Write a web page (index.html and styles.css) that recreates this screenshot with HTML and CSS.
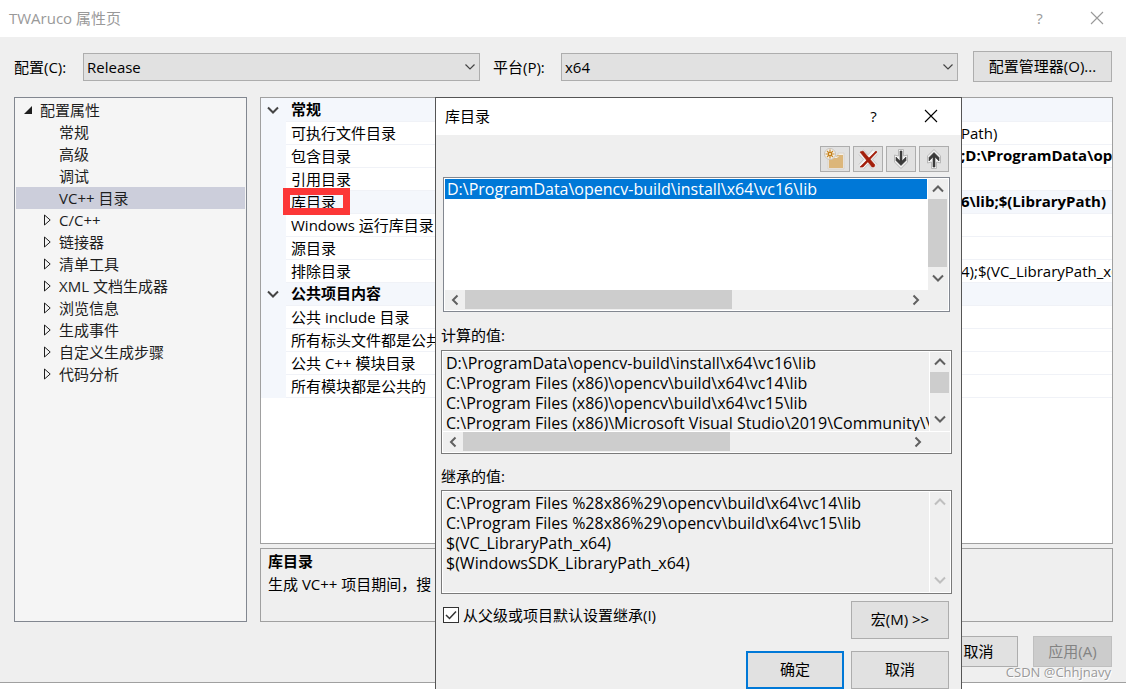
FILE: index.html
```html
<!DOCTYPE html>
<html lang="zh-CN">
<head>
    <meta charset="UTF-8">
    <meta name="viewport" content="width=device-width, initial-scale=1.0">
    <title>TWAruco 属性页</title>
    <link rel="stylesheet" href="styles.css">
</head>
<body>
    <svg class="sprite" width="0" height="0">
        <symbol id="close" viewBox="0 0 14 14"><path d="M1 1L13 13M13 1L1 13" fill="none" stroke="currentColor" stroke-width="1.1"/></symbol>
        <symbol id="down" viewBox="0 0 12 12"><path d="M1 3.5L6 8.5L11 3.5" fill="none" stroke="currentColor" stroke-width="2"/></symbol>
        <symbol id="up" viewBox="0 0 12 12"><path d="M1 8.5L6 3.5L11 8.5" fill="none" stroke="currentColor" stroke-width="2"/></symbol>
        <symbol id="left" viewBox="0 0 12 12"><path d="M8.5 1.5L4 6L8.5 10.5" fill="none" stroke="currentColor" stroke-width="2"/></symbol>
        <symbol id="right" viewBox="0 0 12 12"><path d="M3.5 1.5L8 6L3.5 10.5" fill="none" stroke="currentColor" stroke-width="2"/></symbol>
        <symbol id="thin-down" viewBox="0 0 12 12"><path d="M1.5 3.5L6 8L10.5 3.5" fill="none" stroke="currentColor" stroke-width="1.2"/></symbol>
        <symbol id="closed" viewBox="0 0 8 12"><path d="M1.5 1V11L7.2 6Z" fill="none" stroke="currentColor"/></symbol>
        <symbol id="opened" viewBox="0 0 8 8"><path d="M8 0V8H0Z" fill="currentColor"/></symbol>
    </svg>

    <div class="window">
        <header class="titlebar titlebar-inactive">
            <h1 class="title">TWAruco 属性页</h1>
            <button class="caption" type="button">?</button>
            <button class="caption" type="button" aria-label="关闭"><svg class="close-icon"><use href="#close"/></svg></button>
        </header>

        <main class="content">
            <div class="config-bar">
                <label class="config-label" for="config">配置(C):</label>
                <div class="combo">
                    <select id="config"><option>Release</option></select>
                    <svg class="combo-arrow"><use href="#thin-down"/></svg>
                </div>
                <label class="config-label platform-label" for="platform">平台(P):</label>
                <div class="combo">
                    <select id="platform"><option>x64</option></select>
                    <svg class="combo-arrow"><use href="#thin-down"/></svg>
                </div>
                <button class="btn manager" type="button">配置管理器(O)...</button>
            </div>

            <div class="panes">
                <ul class="tree">
                    <li class="root"><svg class="root-arrow"><use href="#opened"/></svg>配置属性</li>
                    <li>常规</li>
                    <li>高级</li>
                    <li>调试</li>
                    <li class="selected">VC++ 目录</li>
                    <li class="branch"><svg class="branch-arrow"><use href="#closed"/></svg>C/C++</li>
                    <li class="branch"><svg class="branch-arrow"><use href="#closed"/></svg>链接器</li>
                    <li class="branch"><svg class="branch-arrow"><use href="#closed"/></svg>清单工具</li>
                    <li class="branch"><svg class="branch-arrow"><use href="#closed"/></svg>XML 文档生成器</li>
                    <li class="branch"><svg class="branch-arrow"><use href="#closed"/></svg>浏览信息</li>
                    <li class="branch"><svg class="branch-arrow"><use href="#closed"/></svg>生成事件</li>
                    <li class="branch"><svg class="branch-arrow"><use href="#closed"/></svg>自定义生成步骤</li>
                    <li class="branch"><svg class="branch-arrow"><use href="#closed"/></svg>代码分析</li>
                </ul>

                <div class="properties">
                    <div class="grid-box">
                        <table class="grid">
                            <colgroup><col class="col-gutter"><col class="col-name"><col></colgroup>
                            <tbody>
                                <tr class="group first"><td><svg class="group-arrow"><use href="#down"/></svg></td><th colspan="2">常规</th></tr>
                                <tr><td></td><td>可执行文件目录</td><td>Path)</td></tr>
                                <tr><td></td><td>包含目录</td><td class="changed">;D:\ProgramData\opencv-build</td></tr>
                                <tr><td></td><td>引用目录</td><td></td></tr>
                                <tr class="current"><td></td><td class="marked">库目录<span class="mark"></span></td><td class="changed">6\lib;$(LibraryPath)</td></tr>
                                <tr><td></td><td>Windows 运行库目录</td><td></td></tr>
                                <tr><td></td><td>源目录</td><td></td></tr>
                                <tr><td></td><td>排除目录</td><td>4);$(VC_LibraryPath_x64)</td></tr>
                                <tr class="group"><td><svg class="group-arrow"><use href="#down"/></svg></td><th colspan="2">公共项目内容</th></tr>
                                <tr><td></td><td>公共 include 目录</td><td></td></tr>
                                <tr><td></td><td>所有标头文件都是公共</td><td></td></tr>
                                <tr><td></td><td>公共 C++ 模块目录</td><td></td></tr>
                                <tr><td></td><td>所有模块都是公共的</td><td></td></tr>
                            </tbody>
                        </table>
                    </div>
                    <div class="description">
                        <h2>库目录</h2>
                        <p>生成 VC++ 项目期间，搜</p>
                    </div>
                </div>
            </div>

            <footer class="actions">
                <button class="btn action" type="button">取消</button>
                <button class="btn action" type="button" disabled>应用(A)</button>
            </footer>
        </main>
        <span class="watermark">CSDN @Chhjnavy</span>

        <section class="dialog" role="dialog" aria-labelledby="dialog-title">
            <header class="titlebar">
                <h2 class="title" id="dialog-title">库目录</h2>
                <button class="caption" type="button">?</button>
                <button class="caption" type="button" aria-label="关闭"><svg class="close-icon"><use href="#close"/></svg></button>
            </header>

            <div class="dialog-body">
                <div class="tools">
                    <button class="tool" type="button" aria-label="新行">
                        <svg width="22" height="22" viewBox="0 0 22 22">
                            <path d="M4 8H14V5H20V21H4Z" fill="#f3eee6" stroke="#d8d3cc"/>
                            <path d="M5 10H13L15 8H19V20H5Z" fill="#dcb67a"/>
                            <path d="M13 7H19V8H14L12 9Z" fill="#dcb67a"/>
                            <circle cx="6" cy="6" r="5.5" fill="#f5f2ed" stroke="#c8c2ba"/>
                            <path d="M6 1.5V10.5M1.5 6H10.5M3 3L9 9M9 3L3 9" stroke="#c98a2b" stroke-width="1.2"/>
                            <circle cx="6" cy="6" r="2.2" fill="#c27d1a"/>
                            <circle cx="6" cy="6" r="1" fill="#fff3d8"/>
                        </svg>
                    </button>
                    <button class="tool" type="button" aria-label="删除">
                        <svg width="22" height="22" viewBox="0 0 22 22">
                            <path d="M4 4L18 19M18 4L4 19" stroke="#c4c4c4" stroke-width="7"/>
                            <path d="M4 4L18 19M18 4L4 19" stroke="#f4f4f4" stroke-width="5.5"/>
                            <path d="M3 4L6 3L18 17L17 19L15 19ZM19 3L20 4L6 19L3 19Z" fill="#a31f0b" stroke="#a31f0b" stroke-width="0.6"/>
                        </svg>
                    </button>
                    <button class="tool" type="button" aria-label="下移">
                        <svg width="22" height="22" viewBox="0 0 22 22">
                            <path d="M8.5 1.5H13.5V8L17.5 7V14L11 20.5L4.500 14V7L8.500 8Z" fill="#f3f3f3" stroke="#b8b8b8"/>
                            <path d="M10 3H12V13L16 9V12.500L11 17.500L6 12.500V9L10 13Z" fill="#3b3b3b" stroke="#3b3b3b" stroke-width="0.6"/>
                        </svg>
                    </button>
                    <button class="tool" type="button" aria-label="上移">
                        <svg width="22" height="22" viewBox="0 0 22 22">
                            <path d="M8.500 20.500H13.500V14L17.500 15V8L11 1.500L4.500 8V15L8.500 14Z" fill="#f3f3f3" stroke="#b8b8b8"/>
                            <path d="M10 19H12V9L16 13V9.500L11 4.500L6 9.500V13L10 9Z" fill="#3b3b3b" stroke="#3b3b3b" stroke-width="0.6"/>
                        </svg>
                    </button>
                </div>

                <div class="list list-edit">
                    <ul class="lines">
                        <li class="selected-line">D:\ProgramData\opencv-build\install\x64\vc16\lib</li>
                    </ul>
                    <div class="vscroll">
                        <svg><use href="#up"/></svg>
                        <span class="thumb"></span>
                        <svg><use href="#down"/></svg>
                    </div>
                    <div class="hscroll">
                        <svg><use href="#left"/></svg>
                        <span class="thumb"></span>
                        <svg><use href="#right"/></svg>
                    </div>
                </div>

                <h3 class="list-label">计算的值:</h3>
                <div class="list list-values">
                    <ul class="lines">
                        <li>D:\ProgramData\opencv-build\install\x64\vc16\lib</li>
                        <li>C:\Program Files (x86)\opencv\build\x64\vc14\lib</li>
                        <li>C:\Program Files (x86)\opencv\build\x64\vc15\lib</li>
                        <li>C:\Program Files (x86)\Microsoft Visual Studio\2019\Community\\</li>
                    </ul>
                    <div class="vscroll">
                        <svg><use href="#up"/></svg>
                        <span class="thumb short"></span>
                        <svg><use href="#down"/></svg>
                    </div>
                    <div class="hscroll">
                        <svg><use href="#left"/></svg>
                        <span class="thumb"></span>
                        <svg><use href="#right"/></svg>
                    </div>
                </div>

                <h3 class="list-label">继承的值:</h3>
                <div class="list list-values list-inherited">
                    <ul class="lines">
                        <li>C:\Program Files %28x86%29\opencv\build\x64\vc14\lib</li>
                        <li>C:\Program Files %28x86%29\opencv\build\x64\vc15\lib</li>
                        <li>$(VC_LibraryPath_x64)</li>
                        <li>$(WindowsSDK_LibraryPath_x64)</li>
                    </ul>
                    <div class="vscroll idle">
                        <svg><use href="#up"/></svg>
                        <svg><use href="#down"/></svg>
                    </div>
                </div>

                <div class="inherit-row">
                    <label class="inherit" for="inherit">
                        <span class="check">
                            <input type="checkbox" id="inherit" checked>
                            <svg class="tick" viewBox="0 0 16 16"><path d="M3 8L6.500 11.500L13 4.500" fill="none" stroke="#333" stroke-width="1.500"/></svg>
                        </span>
                        从父级或项目默认设置继承(I)
                    </label>
                    <button class="btn big" type="button">宏(M) &gt;&gt;</button>
                </div>
                <div class="dialog-actions">
                    <button class="btn big default" type="button">确定</button>
                    <button class="btn big" type="button">取消</button>
                </div>
            </div>
        </section>
    </div>
</body>
</html>
```
FILE: styles.css
```css
* {
  box-sizing: border-box;
}

body {
  margin: 0;
  background: #fff;
  color: #000;
  font: 15px/20px "Open Sans", "Noto Sans CJK SC", sans-serif;
}

h1, h2, h3, p, ul {
  margin: 0;
  padding: 0;
  font-size: 15px;
  font-weight: normal;
}

ul {
  list-style: none;
}

button, select {
  font: inherit;
  color: inherit;
}

.sprite {
  position: absolute;
}

/* main window */
.window {
  position: relative;
  min-height: 100vh;
  overflow: hidden;
}

.titlebar {
  display: flex;
  align-items: center;
  height: 37px;
  padding: 0 1px 2px 9px;
  background: #fff;
}

.titlebar-inactive {
  color: #999;
}

.title {
  flex: 1;
}

.caption {
  display: flex;
  align-items: center;
  justify-content: center;
  width: 57px;
  height: 35px;
  padding: 0;
  border: 0;
  background: none;
}

.close-icon {
  width: 14px;
  height: 14px;
}

.content {
  padding: 14px 13px 15px 14px;
  background: #efefef;
  border-bottom: 1px solid #a0a0a0;
}

.config-bar {
  display: flex;
  align-items: center;
  height: 31px;
  padding-right: 1px;
}

.config-label {
  width: 69px;
}

.platform-label {
  width: 81px;
  padding-left: 13px;
}

.combo {
  position: relative;
  flex: 1;
}

.combo select {
  display: block;
  width: 100%;
  height: 28px;
  padding: 0 3px;
  border: 1px solid #adadad;
  border-radius: 0;
  background: #e1e1e1;
  appearance: none;
}

.combo-arrow {
  position: absolute;
  right: 4px;
  top: 8px;
  width: 12px;
  height: 12px;
  color: #444;
  pointer-events: none;
}

.btn {
  padding: 0 0 2px;
  border: 1px solid #adadad;
  background: #e1e1e1;
}

.btn:disabled {
  border-color: #bfbfbf;
  background: #ccc;
  color: #838383;
}

.manager {
  width: 139px;
  height: 31px;
  margin-left: 15px;
}

.panes {
  display: flex;
  gap: 13px;
  height: 525px;
  margin-top: 15px;
}

/* category tree */
.tree {
  width: 233px;
  padding: 1px;
  border: 1px solid #828790;
  background: #f5f5f5;
  color: #1e1e1e;
}

.tree li {
  display: flex;
  align-items: center;
  height: 22px;
  padding-left: 43px;
}

.tree .root {
  gap: 8px;
  padding-left: 8px;
}

.tree .branch {
  gap: 8px;
  padding-left: 27px;
}

.tree .selected {
  background: #cccedb;
}

.root-arrow {
  width: 8px;
  height: 8px;
}

.branch-arrow {
  width: 8px;
  height: 12px;
}

/* property grid */
.properties {
  display: flex;
  flex: 1;
  flex-direction: column;
  gap: 4px;
  min-width: 0;
}

.grid-box {
  flex: 1;
  border: 1px solid #a0a0a0;
  background: #fff;
  overflow: hidden;
}

.grid {
  width: 100%;
  table-layout: fixed;
  border-collapse: separate;
  border-spacing: 0;
}

.col-gutter {
  width: 25px;
}

.col-name {
  width: 670px;
}

.grid td,
.grid th {
  height: 23px;
  padding: 0 0 0 5px;
  border-bottom: 1px solid #f0f2f7;
  line-height: 20px;
  text-align: left;
  white-space: nowrap;
}

.grid td:last-child {
  overflow: hidden;
}

.grid td:first-child {
  padding: 0 0 0 6px;
  border-bottom-color: #f4f7fc;
  background: #f4f7fc;
}

.grid th,
.grid .changed {
  padding-bottom: 2px;
}

.grid .first td,
.grid .first th {
  height: 24px;
}

.group th,
.current td {
  background: #f4f7fc;
}

.grid .changed,
.description h2 {
  font-weight: bold;
}

.group-arrow {
  display: block;
  width: 12px;
  height: 12px;
  color: #444;
}

.marked {
  position: relative;
}

/* red frame round the row name */
.mark {
  position: absolute;
  left: -3px;
  top: -3px;
  width: 67px;
  height: 27px;
  border: 7px solid #fc3737;
}

.description {
  height: 74px;
  padding: 1px 7px;
  border: 1px solid #a0a0a0;
  line-height: 23px;
}

.actions {
  display: flex;
  justify-content: flex-end;
  gap: 15px;
  margin-top: 14px;
  padding-right: 1px;
}

.action {
  width: 79px;
  height: 31px;
}

.watermark {
  position: absolute;
  right: 15px;
  top: 663px;
  color: #999;
  font-size: 13px;
  line-height: 18px;
  text-shadow: 1px 1px 0 #fff;
}

/* directory dialog */
.dialog {
  position: absolute;
  left: 435px;
  top: 97px;
  bottom: 0;
  width: 527px;
  border: 1px solid #555;
  border-bottom: 0;
  background: #efefef;
}

.dialog .titlebar {
  padding-right: 2px;
}

.dialog-body {
  padding: 11px 9px 0 5px;
}

.tools {
  display: flex;
  justify-content: flex-end;
  gap: 3px;
  padding-right: 3px;
}

.tool {
  display: flex;
  align-items: center;
  justify-content: center;
  width: 30px;
  height: 26px;
  padding: 0;
  border: 1px solid #adadad;
  background: #e1e1e1;
}

.list {
  display: grid;
  grid-template-columns: 1fr 20px;
  grid-template-rows: 1fr 20px;
  padding: 1px;
  border: 1px solid #828790;
  background: #fff;
}

.list-edit {
  height: 135px;
  margin: 5px 2px 0;
}

.list-values {
  gap: 1px;
  height: 104px;
  border-color: #7a7a7a;
}

.list-inherited {
  grid-template-rows: 1fr;
}

.lines {
  min-width: 0;
  overflow: hidden;
  font-size: 16px;
  white-space: nowrap;
}

.list-values .lines {
  padding: 1px 0 0 3px;
  background: #efefef;
}

.selected-line {
  padding-left: 2px;
  margin-right: 1px;
  background: #0078d7;
  color: #fff;
}

.vscroll,
.hscroll {
  display: flex;
  background: #efefef;
  color: #606060;
}

.vscroll {
  flex-direction: column;
  justify-content: space-between;
  padding-bottom: 2px;
}

.hscroll {
  grid-column: 1 / -1;
  justify-content: space-between;
  padding-right: 22px;
}

.vscroll svg,
.hscroll svg {
  flex: none;
  width: 20px;
  height: 20px;
  padding: 4px;
}

.vscroll .thumb {
  width: 19px;
  height: 68px;
  margin-bottom: auto;
  background: #cdcdcd;
}

.vscroll .short {
  height: 21px;
}

.hscroll .thumb {
  width: 267px;
  height: 19px;
  margin-right: auto;
  background: #cdcdcd;
}

.idle {
  color: #bfbfbf;
}

.list-label {
  padding: 12px 0 4px;
}

.list-edit + .list-label {
  padding: 13px 0 5px;
}

.inherit-row {
  display: flex;
  align-items: flex-start;
  justify-content: space-between;
  padding: 7px 3px 0 2px;
}

.inherit {
  display: flex;
  align-items: center;
  gap: 4px;
  padding-top: 4px;
}

.check {
  position: relative;
  width: 16px;
  height: 16px;
}

.check input {
  display: block;
  width: 16px;
  height: 16px;
  margin: 0;
  border: 1px solid #333;
  background: #fff;
  appearance: none;
}

.tick {
  position: absolute;
  left: 0;
  top: 0;
  width: 16px;
  height: 16px;
}

.check input:not(:checked) + .tick {
  display: none;
}

.big {
  width: 98px;
  height: 38px;
}

.default {
  border: 2px solid #0078d7;
}

.dialog-actions {
  display: flex;
  justify-content: flex-end;
  gap: 7px;
  padding: 12px 3px 0 0;
}
```
